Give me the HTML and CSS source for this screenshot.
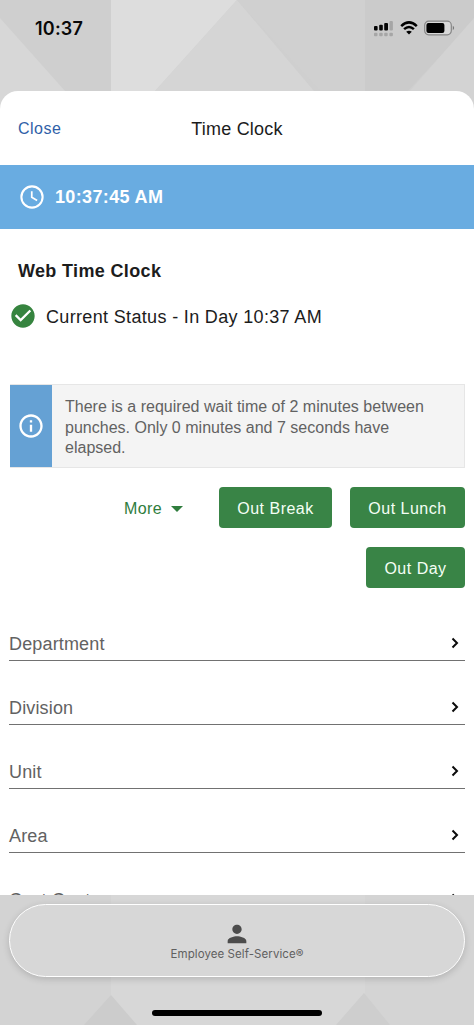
FILE: index.html
```html
<!DOCTYPE html>
<html lang="en">
<head>
<meta charset="utf-8">
<title>Time Clock</title>
<link rel="stylesheet" href="styles.css">
</head>
<body>
<div class="phone">
  <header class="status-bar">
    <svg class="backdrop" viewBox="0 0 474 110" preserveAspectRatio="none">
      <rect width="474" height="110" fill="#cfcfcf"/>
      <path d="M0 18L82 110H0z" fill="#d7d7d7"/>
      <path d="M111 0H237L138 110H111z" fill="#dddddd"/>
      <path d="M237 0L330 110H138z" fill="#d5d5d5"/>
      <path d="M237 0H365V110H338z" fill="#d0d0d0"/>
      <path d="M365 0H474V20L390 110H365z" fill="#cbcbcb"/>
      <path d="M474 18V110H393z" fill="#d3d3d3"/>
    </svg>
    <span class="status-time">10:37</span>
    <div class="status-icons">
      <svg class="signal" width="20" height="16" viewBox="0 0 20 16">
        <g fill="#050505"><rect x="0" y="5" width="3.600" height="4.500" rx="1"/><rect x="5.200" y="3.800" width="3.600" height="5.700" rx="1"/><rect x="10.200" y="2" width="3.800" height="7.500" rx="1"/></g>
        <g fill="#a6a6a6"><rect x="15.500" y="0" width="3.400" height="9.500" rx="1"/><rect x="0" y="11.800" width="3.500" height="3.400" rx="1"/><rect x="5.200" y="11.800" width="3.500" height="3.400" rx="1"/><rect x="10.200" y="11.800" width="3.500" height="3.400" rx="1"/><rect x="15.400" y="11.800" width="3.500" height="3.400" rx="1"/></g>
      </svg>
      <svg class="wifi" width="18" height="14" viewBox="0 0 18 14">
        <path d="M1.200 5.100Q9-2.400 16.800 5.100M4.100 8.200Q9 3.700 13.900 8.200" fill="none" stroke="#000" stroke-width="2.500"/>
        <path d="M6.200 10.800Q9 8.700 11.800 10.800L9 13.600z" fill="#000"/>
      </svg>
      <svg class="battery" width="31" height="16" viewBox="0 0 31 16">
        <rect x=".7" y="1.200" width="26.600" height="13.600" rx="4" fill="#d8d8d8" stroke="#858585" stroke-width="1.200"/>
        <rect x="2.400" y="3" width="18" height="10" rx="2" fill="#000"/>
        <path d="M28.800 5.800Q31.500 8 28.800 10.200z" fill="#777"/>
      </svg>
    </div>
  </header>

  <main class="sheet">
    <div class="sheet-header">
      <span class="close">Close</span>
      <span class="sheet-title">Time Clock</span>
    </div>
    <div class="clock-banner">
      <svg class="icon" viewBox="0 0 24 24"><circle cx="12" cy="12" r="9.100" fill="none" stroke="currentColor" stroke-width="1.800"/><path d="M11.800 7v5.300l4.600 2.800" fill="none" stroke="currentColor" stroke-width="1.500"/></svg>
      <span class="clock-time">10:37:45 AM</span>
    </div>
    <h1 class="heading">Web Time Clock</h1>
    <div class="current">
      <svg class="icon check" viewBox="0 0 24 24"><path fill="currentColor" d="M12 2C6.480 2 2 6.480 2 12s4.480 10 10 10 10-4.480 10-10S17.520 2 12 2zm-2 15l-5-5 1.410-1.410L10 14.170l7.590-7.590L19 8l-9 9z"/></svg>
      <span class="current-text">Current Status - In Day 10:37 AM</span>
    </div>
    <div class="notice">
      <div class="notice-side">
        <svg class="icon" viewBox="0 0 24 24"><path fill="currentColor" d="M11 7h2v2h-2zm0 4h2v6h-2zm1-9C6.480 2 2 6.480 2 12s4.480 10 10 10 10-4.480 10-10S17.520 2 12 2zm0 18c-4.410 0-8-3.590-8-8s3.590-8 8-8 8 3.590 8 8-3.590 8-8 8z"/></svg>
      </div>
      <p class="notice-text">There is a required wait time of 2 minutes between<br>punches. Only 0 minutes and 7 seconds have<br>elapsed.</p>
    </div>
    <div class="actions">
      <span class="more">More <i class="caret"></i></span>
      <button class="btn btn-break">Out Break</button>
      <button class="btn btn-lunch">Out Lunch</button>
      <button class="btn btn-day">Out Day</button>
    </div>
    <div class="fields">
      <div class="field"><span>Department</span><svg class="chevron" viewBox="0 0 8 12"><path d="M1.500 1.500L6 6L1.500 10.500"/></svg></div>
      <div class="field"><span>Division</span><svg class="chevron" viewBox="0 0 8 12"><path d="M1.500 1.500L6 6L1.500 10.500"/></svg></div>
      <div class="field"><span>Unit</span><svg class="chevron" viewBox="0 0 8 12"><path d="M1.500 1.500L6 6L1.500 10.500"/></svg></div>
      <div class="field"><span>Area</span><svg class="chevron" viewBox="0 0 8 12"><path d="M1.500 1.500L6 6L1.500 10.500"/></svg></div>
      <div class="field"><span>Cost Center</span><svg class="chevron" viewBox="0 0 8 12"><path d="M1.500 1.500L6 6L1.500 10.500"/></svg></div>
    </div>
  </main>

  <footer class="dock">
    <svg class="backdrop" viewBox="0 0 474 130" preserveAspectRatio="none">
      <rect width="474" height="130" fill="#d4d4d4"/>
      <path d="M0 0H111V130H0z" fill="#d3d3d3"/>
      <path d="M111 0H365V130H111z" fill="#d7d7d7"/>
      <path d="M111 100L137 130H84z" fill="#cccccc"/>
      <path d="M364 98L390 130H336z" fill="#cecece"/>
    </svg>
    <div class="tab-pill">
      <svg class="person" viewBox="0 0 24 24"><path fill="#4c4c4c" d="M12 12c2.210 0 4-1.790 4-4s-1.790-4-4-4-4 1.790-4 4 1.790 4 4 4zm0 2c-2.670 0-8 1.340-8 4v2h16v-2c0-2.660-5.330-4-8-4z"/></svg>
      <span class="tab-label">Employee Self-Service®</span>
    </div>
    <div class="home-bar"></div>
  </footer>
</div>
</body>
</html>
```
FILE: styles.css
```css
* { box-sizing: border-box; }
body { margin: 0; font-family: "Liberation Sans", Arial, sans-serif; color: #1c1c1c; }
.phone { width: 474px; height: 1025px; display: flex; flex-direction: column; overflow: hidden; background: #fff; }

.status-bar { position: relative; height: 110px; flex: none; display: flex; justify-content: space-between; align-items: flex-start; padding: 17px 19px 0 35px; }
.backdrop { position: absolute; inset: 0; width: 100%; height: 100%; z-index: 0; }
.status-time { position: relative; font-family: Inter, sans-serif; font-size: 18px; line-height: 23px; font-weight: 600; color: #080808; letter-spacing: .2px; }
.status-icons { position: relative; display: flex; align-items: flex-start; padding-top: 3px; }
.signal { margin: 1px 6px 0 0; }
.wifi { margin: 1px 6px 0 0; }
.battery { margin: 0; }

.sheet { position: relative; flex: none; height: 804px; margin-top: -19px; background: #fff; border-radius: 18px 18px 0 0; overflow: hidden; display: flex; flex-direction: column; }
.sheet-header { height: 74px; flex: none; display: grid; grid-template-columns: 1fr auto 1fr; align-items: center; padding: 2px 18px 0; }
.close { font-size: 16px; letter-spacing: .5px; color: #315fa8; }
.sheet-title { font-size: 18px; letter-spacing: .2px; }
.clock-banner { height: 64px; flex: none; display: flex; align-items: center; gap: 9px; padding-left: 18px; background: #69ace1; color: #fff; }
.icon { width: 28px; height: 28px; flex: none; display: block; }
.clock-time { font-size: 18px; font-weight: 700; letter-spacing: .35px; padding-top: 1px; }
.heading { margin: 31px 0 0 18px; font-size: 18px; line-height: 22px; font-weight: 700; letter-spacing: .35px; }
.current { display: flex; align-items: center; gap: 9px; height: 28px; margin: 20px 0 0 9px; }
.check { color: #36843f; }
.current-text { font-size: 18px; letter-spacing: .34px; padding-top: 2px; white-space: nowrap; }
.notice { display: flex; flex: none; height: 84px; margin: 54px 9px 0 10px; background: #f4f4f4; border: 1px solid #e6e6e6; border-left: 0; }
.notice-side { width: 42px; flex: none; display: flex; align-items: center; justify-content: center; background: #65a1d4; color: #fff; }
.notice-text { margin: 12px 0 0 13px; font-size: 16px; line-height: 20.500px; letter-spacing: .01px; color: #626262; white-space: nowrap; }

.actions { display: flex; flex-wrap: wrap; justify-content: flex-end; align-items: center; gap: 19px 18px; padding: 19px 9px 0 90px; flex: none; }
.more { display: flex; align-items: center; gap: 9px; padding-top: 2px; font-size: 16px; letter-spacing: .4px; color: #2f7d3d; margin-right: 18px; }
.caret { border: 6px solid transparent; border-top-color: currentColor; border-bottom: 0; }
.btn { height: 41px; padding: 2px 0 0; border: 0; border-radius: 4px; background: #398446; color: #f4fff5; font: 16px "Liberation Sans", Arial, sans-serif; letter-spacing: .5px; }
.btn-break { width: 113px; }
.btn-lunch { width: 115px; }
.btn-day { width: 99px; }

.fields { margin: 9px 9px 0; flex: none; }
.field { height: 64px; display: flex; justify-content: space-between; align-items: flex-end; padding: 0 6px 5px 0; border-bottom: 1px solid #717171; font-size: 18px; line-height: 22px; color: #626262; letter-spacing: .15px; }
.chevron { width: 8px; height: 12px; margin-bottom: 6px; fill: none; stroke: #0b0b0b; stroke-width: 2; }

.dock { position: relative; height: 130px; flex: none; display: flex; flex-direction: column; align-items: center; padding-top: 9px; }
.tab-pill { position: relative; width: 456px; height: 73px; display: flex; flex-direction: column; align-items: center; padding-top: 15px; border: 1.500px solid #fff; border-radius: 37px; background: #d7d7d7; box-shadow: 0 2px 7px rgba(0, 0, 0, .16); }
.person { width: 28px; height: 28px; flex: none; }
.tab-label { margin-top: -1px; font-family: Inter, sans-serif; font-size: 11.500px; line-height: 15px; color: #606060; letter-spacing: .08px; }
.home-bar { position: relative; width: 170px; height: 6px; margin-top: 33px; border-radius: 3px; background: #000; }
```
